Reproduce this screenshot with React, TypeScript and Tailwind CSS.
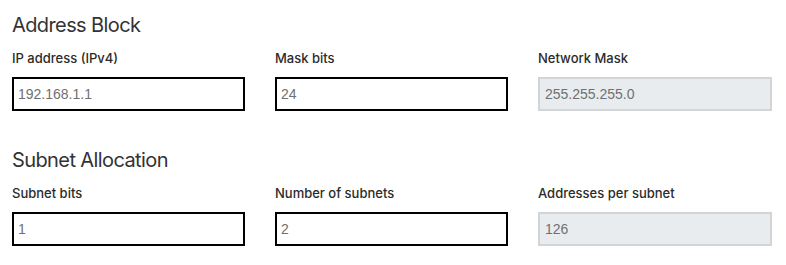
import React from "react";

type Field = { label: string; value: string; readOnly?: boolean };

function FieldBox({ label, value, readOnly }: Field) {
  return (
    <div className="flex flex-col">
      <label className="text-[13px] leading-[16px] font-medium text-[#2b2b2b] font-['Inter',sans-serif]">{label}</label>
      <div
        className={
          readOnly
            ? "mt-[11px] h-[34px] border-2 border-[#d2d4d6] bg-[#e9ecee] flex items-center pl-[5px]"
            : "mt-[11px] h-[34px] border-2 border-black bg-white flex items-center pl-[4px]"
        }
      >
        <span className="text-[14px] text-[#707070] font-['Liberation_Sans',Arial,sans-serif]">{value}</span>
      </div>
    </div>
  );
}

function Section({ title, fields, className }: { title: string; fields: Field[]; className?: string }) {
  return (
    <section className={className}>
      <h2 className="text-[20px] leading-[24px] tracking-[-0.6px] text-[#333] font-['Inter',sans-serif] font-normal">{title}</h2>
      <div className="mt-[13px] grid grid-cols-[233px_233px_234px] gap-x-[30px]">
        {fields.map((f) => (
          <FieldBox key={f.label} {...f} />
        ))}
      </div>
    </section>
  );
}

export default function App() {
  return (
    <div className="w-[786px] h-[265px] bg-white px-[12px] pt-[13px]">
      <Section
        title="Address Block"
        fields={[
          { label: "IP address (IPv4)", value: "192.168.1.1" },
          { label: "Mask bits", value: "24" },
          { label: "Network Mask", value: "255.255.255.0", readOnly: true },
        ]}
      />
      <Section
        className="mt-[37px]"
        title="Subnet Allocation"
        fields={[
          { label: "Subnet bits", value: "1" },
          { label: "Number of subnets", value: "2" },
          { label: "Addresses per subnet", value: "126", readOnly: true },
        ]}
      />
    </div>
  );
}
